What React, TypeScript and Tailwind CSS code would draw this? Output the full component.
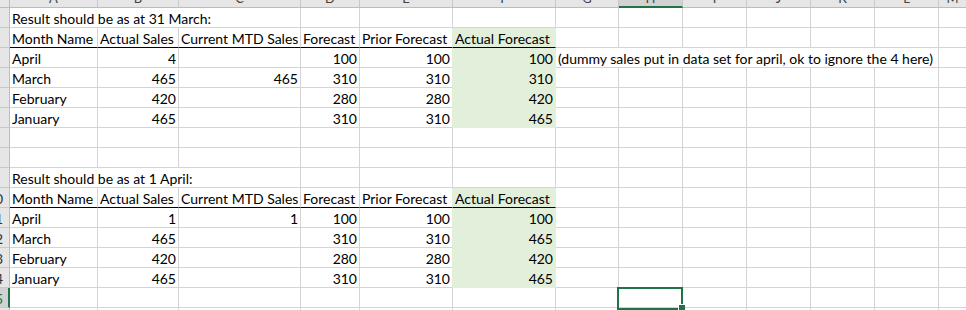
const COLS = ["A", "B", "C", "D", "E", "F", "G", "H", "I", "J", "K", "L", "M"];

// row header + columns A..M, widths include the 1px gridline on the right
const GRID =
  "grid grid-cols-[10px_88px_81px_122px_59px_93px_103px_63px_64px_64px_64px_64px_64px_1fr]";

const HEADINGS = [
  "Month Name",
  "Actual Sales",
  "Current MTD Sales",
  "Forecast",
  "Prior Forecast",
  "Actual Forecast",
];

type Cell = {
  text?: string;
  num?: boolean;
  span?: 3 | 6;
  fill?: boolean;
  rule?: boolean;
  edge?: boolean;
};

const empty = (n: number): Cell[] => Array.from({ length: n }, () => ({}));

function block(title: string, data: string[][], note?: string): Cell[][] {
  const rows: Cell[][] = [];
  rows.push([{ text: title, span: 3 }, ...empty(10)]);
  rows.push([
    ...HEADINGS.map((h, i) => ({ text: h, rule: true, fill: i === 5, edge: i === 4 })),
    ...empty(7),
  ]);
  data.forEach((d, r) => {
    const cells: Cell[] = d.map((v, i) => ({
      text: v,
      num: i > 0,
      fill: i === 5,
      edge: i === 4,
    }));
    if (r === 0 && note) cells.push({ text: note, span: 6 }, {});
    else cells.push(...empty(7));
    rows.push(cells);
  });
  return rows;
}

const SHEET: Cell[][] = [
  ...block(
    "Result should be as at 31 March:",
    [
      ["April", "4", "", "100", "100", "100"],
      ["March", "465", "465", "310", "310", "310"],
      ["February", "420", "", "280", "280", "420"],
      ["January", "465", "", "310", "310", "465"],
    ],
    "(dummy sales put in data set for april, ok to ignore the 4 here)"
  ),
  empty(13),
  empty(13),
  ...block("Result should be as at 1 April:", [
    ["April", "1", "1", "100", "100", "100"],
    ["March", "465", "", "310", "310", "465"],
    ["February", "420", "", "280", "280", "420"],
    ["January", "465", "", "310", "310", "465"],
  ]),
  empty(13),
  empty(13),
];

const ACTIVE_ROW = 15;
const ACTIVE_COL = 7; // H

function CellView({ cell, last }: { cell: Cell; last: boolean }) {
  const cls = [
    "flex items-end h-5 px-[2px] leading-4 whitespace-nowrap overflow-hidden border-b",
    last ? "" : "border-r",
    cell.span === 3 ? "col-span-3" : cell.span === 6 ? "col-span-6" : "",
    cell.num ? "justify-end" : "",
    cell.fill
      ? "bg-[#e2efda] border-r-[#e2efda]"
      : cell.edge
        ? "border-r-[#e2efda]"
        : "border-r-[#d4d4d4]",
    cell.rule
      ? "border-b-black"
      : cell.fill
        ? "border-b-[#e2efda]"
        : "border-b-[#d4d4d4]",
  ].join(" ");
  return <div className={cls}>{cell.text}</div>;
}

function RowHeader({ n }: { n: number }) {
  const active = n === ACTIVE_ROW;
  return (
    <div
      className={
        "h-5 overflow-hidden border-b border-b-[#c8c8c8] " +
        (active
          ? "bg-[#d2d2d2] border-r-2 border-r-[#217346] text-[#217346]"
          : "bg-[#e6e6e6] border-r border-r-[#bcbcbc] text-[#333]")
      }
    >
      {/* only the right edge of the number column is scrolled into view */}
      <div className="w-[26px] -ml-[18px] text-center leading-4 pt-[3px]">{n}</div>
    </div>
  );
}

function ColumnHeaders() {
  return (
    <>
      <div className="h-2 bg-[#e6e6e6] border-r border-r-[#bcbcbc] border-b border-b-[#bcbcbc]" />
      {COLS.map((c, i) => (
        <div
          key={c}
          className={
            "h-2 overflow-hidden flex justify-center items-start " +
            (i === ACTIVE_COL
              ? "bg-[#d2d2d2] border-b-2 border-b-[#217346] text-[#444] "
              : "bg-[#e6e6e6] border-b border-b-[#bcbcbc] text-[#444] ") +
            (i === COLS.length - 1 ? "" : "border-r border-r-[#c8c8c8]")
          }
        >
          <span className="-mt-[9px] leading-[14px] text-[13px]">{c}</span>
        </div>
      ))}
    </>
  );
}

export default function App() {
  return (
    <div className="w-[966px] h-[310px] overflow-hidden bg-white font-[Lato,sans-serif] text-[14px] text-black">
      <div className={"relative " + GRID}>
        <ColumnHeaders />
        {SHEET.map((row, r) => (
          <div key={r} className="contents">
            <RowHeader n={r + 1} />
            {row.map((cell, c) => (
              <CellView key={c} cell={cell} last={c === row.length - 1} />
            ))}
          </div>
        ))}

        {/* active cell H15 with fill handle */}
        <div className="absolute left-[617px] top-[287px] w-[66px] h-[23px] border-2 border-[#217346]">
          <div className="absolute -right-[4px] -bottom-[3px] w-[7px] h-[7px] bg-[#217346] border-l border-t border-white" />
        </div>
      </div>
    </div>
  );
}
